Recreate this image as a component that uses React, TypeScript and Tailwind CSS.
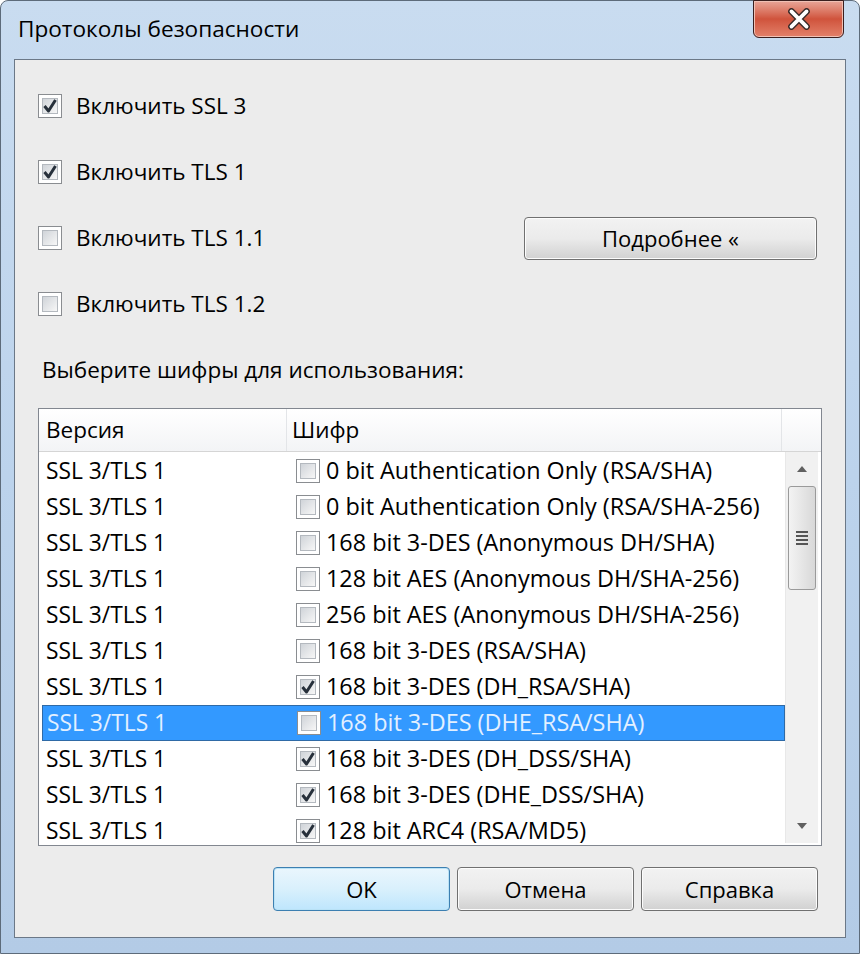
import React from "react";

type Cipher = { version: string; name: string; checked: boolean; selected?: boolean };

const ciphers: Cipher[] = [
  { version: "SSL 3/TLS 1", name: "0 bit Authentication Only (RSA/SHA)", checked: false },
  { version: "SSL 3/TLS 1", name: "0 bit Authentication Only (RSA/SHA-256)", checked: false },
  { version: "SSL 3/TLS 1", name: "168 bit 3-DES (Anonymous DH/SHA)", checked: false },
  { version: "SSL 3/TLS 1", name: "128 bit AES (Anonymous DH/SHA-256)", checked: false },
  { version: "SSL 3/TLS 1", name: "256 bit AES (Anonymous DH/SHA-256)", checked: false },
  { version: "SSL 3/TLS 1", name: "168 bit 3-DES (RSA/SHA)", checked: false },
  { version: "SSL 3/TLS 1", name: "168 bit 3-DES (DH_RSA/SHA)", checked: true },
  { version: "SSL 3/TLS 1", name: "168 bit 3-DES (DHE_RSA/SHA)", checked: false, selected: true },
  { version: "SSL 3/TLS 1", name: "168 bit 3-DES (DH_DSS/SHA)", checked: true },
  { version: "SSL 3/TLS 1", name: "168 bit 3-DES (DHE_DSS/SHA)", checked: true },
  { version: "SSL 3/TLS 1", name: "128 bit ARC4 (RSA/MD5)", checked: true },
];

const protocols = [
  { label: "Включить SSL 3", checked: true },
  { label: "Включить TLS 1", checked: true },
  { label: "Включить TLS 1.1", checked: false },
  { label: "Включить TLS 1.2", checked: false },
];

function CheckBox({ checked }: { checked: boolean }) {
  return (
    <div className="w-[24px] h-[24px] shrink-0 border border-[#8a8d91] bg-white p-[3px]">
      <div className="relative w-full h-full border border-[#b4b9bf] bg-gradient-to-br from-[#d0d4d9] to-[#f7f7f7]">
        {checked && (
          <svg viewBox="0 0 16 16" className="absolute -inset-px w-[calc(100%+2px)] h-[calc(100%+2px)]">
            <path d="M2.5 8 L6.5 13 L13.5 2" fill="none" stroke="#27303b" strokeWidth="3" strokeLinejoin="round" />
          </svg>
        )}
      </div>
    </div>
  );
}

function Button({ children, primary, className }: { children: React.ReactNode; primary?: boolean; className?: string }) {
  return (
    <button
      type="button"
      className={
        "flex items-center justify-center rounded-[4px] border text-[22px] text-black " +
        (primary
          ? "border-[#3c7fb1] bg-gradient-to-b from-[#eaf6fd] via-[#d9f0fc] to-[#bee6fd] shadow-[inset_0_0_0_1px_#b9e2f6] "
          : "border-[#707070] bg-gradient-to-b from-[#f2f2f2] via-[#ebebeb] to-[#d1d1d1] shadow-[inset_0_0_0_1px_#fcfcfc] ") +
        (className ?? "")
      }
    >
      {children}
    </button>
  );
}

export default function App() {
  return (
    <div
      className="w-[860px] h-[954px] overflow-hidden bg-white"
      style={{ fontFamily: '"Open Sans", "Noto Sans", sans-serif' }}
    >
      <div className="w-full h-full flex flex-col rounded-t-[8px] border border-[#5d6b7a] bg-gradient-to-b from-[#c9dcf0] via-[#bcd3ec] to-[#b3cbe6] px-[13px] pb-[15px]">
        {/* title bar */}
        <div className="relative h-[58px] shrink-0 flex items-center">
          <span className="text-[22.6px] text-black pl-[4px] pb-[2px]">Протоколы безопасности</span>
          <div className="absolute right-[2px] -top-px w-[91px] h-[38px] rounded-b-[6px] border border-[#3b1f1f] bg-gradient-to-b from-[#e8a598] via-[#d0533c] to-[#e2806a] flex items-center justify-center shadow-[inset_0_0_0_1px_#f0c0b4]">
            <svg viewBox="0 0 24 20" className="w-[26px] h-[22px]">
              <path d="M5 3 L19 17 M19 3 L5 17" stroke="#3a2a28" strokeWidth="6" strokeLinecap="round" />
              <path d="M5 3 L19 17 M19 3 L5 17" stroke="#ffffff" strokeWidth="3.4" strokeLinecap="round" />
            </svg>
          </div>
        </div>

        {/* client area */}
        <div className="flex-1 flex flex-col border border-[#6b7887] bg-[#ececec] px-[23px] pt-[13px]">
          {protocols.map((p, i) => (
            <div key={p.label} className="h-[66px] flex items-center">
              <CheckBox checked={p.checked} />
              <span className="ml-[14px] text-[22.5px] text-black">{p.label}</span>
              {i === 2 && (
                <Button className="ml-auto mr-[5px] w-[293px] h-[43px]">Подробнее «</Button>
              )}
            </div>
          ))}

          <div className="h-[66px] flex items-center pl-[4px] text-[22.5px] text-black">
            Выберите шифры для использования:
          </div>

          {/* list */}
          <div className="mt-[5px] h-[438px] border border-[#828790] bg-white flex flex-col overflow-hidden">
            <div className="h-[43px] shrink-0 flex border-b border-[#d5d5d5] bg-gradient-to-b from-[#ffffff] to-[#f3f4f6] text-[22.5px] text-black">
              <div className="w-[248px] flex items-center pl-[7px] border-r border-[#e3e5e8]">Версия</div>
              <div className="w-[495px] flex items-center pl-[5px] border-r border-[#e3e5e8]">Шифр</div>
              <div className="flex-1" />
            </div>
            <div className="flex-1 flex min-h-0">
              <div className="flex-1 pt-px pl-[3px] overflow-hidden">
                {ciphers.map((c, i) => (
                  <div
                    key={i}
                    className={
                      "h-[36px] flex items-center " +
                      (c.selected ? "bg-[#3399ff] text-[#e3f0ff] border border-[#2f6aa6]" : "text-black")
                    }
                  >
                    <div className="w-[245px] pl-[4px] whitespace-nowrap text-[22.8px]">{c.version}</div>
                    <div className="flex items-center pl-[9px]">
                      <CheckBox checked={c.checked} />
                      <span className="ml-[6px] whitespace-nowrap text-[23.4px]">{c.name}</span>
                    </div>
                  </div>
                ))}
              </div>
              {/* scrollbar */}
              <div className="w-[33px] shrink-0 flex flex-col bg-[#f1f1f1] border-l border-[#e8e8e8] mr-[3px] mb-[2px]">
                <div className="h-[34px] flex items-center justify-center">
                  <svg viewBox="0 0 10 6" className="w-[10px] h-[6px]">
                    <path d="M0 6 L5 0 L10 6 Z" fill="#606060" />
                  </svg>
                </div>
                <div className="mx-[2px] h-[104px] rounded-[3px] border border-[#9a9a9a] bg-gradient-to-r from-[#f3f3f3] via-[#e6e6e6] to-[#d8d8d8] flex items-center justify-center">
                  <div className="flex flex-col gap-[2px]">
                    <div className="w-[12px] h-[2px] bg-[#555]" />
                    <div className="w-[12px] h-[2px] bg-[#555]" />
                    <div className="w-[12px] h-[2px] bg-[#555]" />
                    <div className="w-[12px] h-[2px] bg-[#555]" />
                  </div>
                </div>
                <div className="flex-1" />
                <div className="h-[34px] flex items-center justify-center">
                  <svg viewBox="0 0 10 6" className="w-[10px] h-[6px]">
                    <path d="M0 0 L10 0 L5 6 Z" fill="#606060" />
                  </svg>
                </div>
              </div>
            </div>
          </div>

          {/* buttons */}
          <div className="mt-[21px] flex justify-end gap-[7px] pr-[4px]">
            <Button primary className="w-[177px] h-[44px]">OK</Button>
            <Button className="w-[177px] h-[44px]">Отмена</Button>
            <Button className="w-[177px] h-[44px]">Справка</Button>
          </div>
        </div>
      </div>
    </div>
  );
}
